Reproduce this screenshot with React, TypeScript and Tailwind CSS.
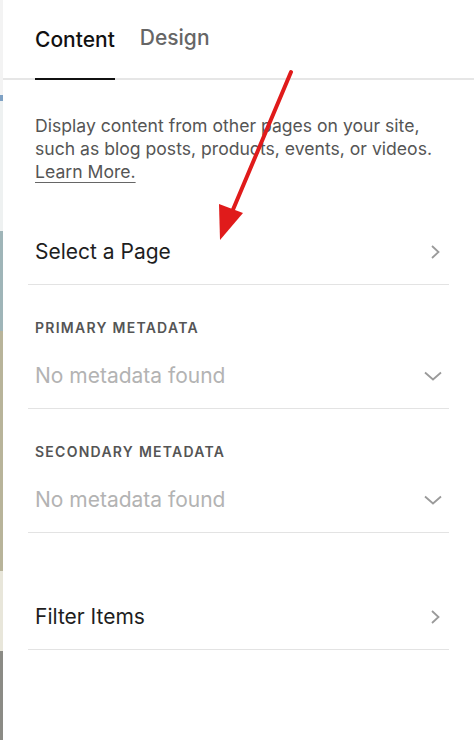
import React from 'react';

const font = { fontFamily: 'Inter, "Noto Sans", sans-serif' };

const ChevronRight = () => (
  <svg width="14" height="16" viewBox="0 0 14 16" fill="none" className="text-[#9a9a9a]">
    <path d="M4 2l6.5 6L4 14" stroke="currentColor" strokeWidth="1.8" />
  </svg>
);

const ChevronDown = () => (
  <svg width="22" height="12" viewBox="0 0 22 12" fill="none" className="text-[#9a9a9a]">
    <path d="M3 2.5l8 7 8-7" stroke="currentColor" strokeWidth="1.8" />
  </svg>
);

const Row = ({ label }: { label: string }) => (
  <div className="flex items-center justify-between h-[66px] pl-[7px] pr-[7px] border-b border-[#e3e3e3]">
    <span className="text-[21px] text-[#1e1e1e]">{label}</span>
    <ChevronRight />
  </div>
);

const MetaSelect = ({ title }: { title: string }) => (
  <div className="pt-[35px] border-b border-[#e3e3e3]">
    <div className="pl-[7px] text-[14px] font-semibold tracking-[0.09em] text-[#555] leading-[16px]">{title}</div>
    <div className="flex items-center justify-between mt-[8px] h-[64px] pl-[7px] pr-[5px]">
      <span className="text-[21px] text-[#b3b3b3]">No metadata found</span>
      <ChevronDown />
    </div>
  </div>
);

export default function App() {
  return (
    <div className="relative w-[474px] h-[740px] bg-white flex overflow-hidden" style={font}>
      <div className="w-[3px] flex flex-col">
        <div className="h-[95px] bg-[#f3f3f3]" />
        <div className="h-[6px] bg-[#7ea1c4]" />
        <div className="h-[130px] bg-[#eef1f1]" />
        <div className="h-[100px] bg-[#9fb5b8]" />
        <div className="h-[240px] bg-[#b8b49a]" />
        <div className="h-[80px] bg-[#e8e6da]" />
        <div className="flex-1 bg-[#8b8b85]" />
      </div>
      <div className="flex-1">
        <div className="flex items-end gap-[25px] pl-[32px] h-[80px] border-b-2 border-[#e6e6e6]">
          <div className="border-b-2 border-[#111] -mb-[2px]">
            <div className="pb-[25px] text-[21px] font-medium text-[#111] leading-[26px]">Content</div>
          </div>
          <div className="pb-[27px] text-[21px] font-medium text-[#666] leading-[26px]">Design</div>
        </div>

        <div className="px-[25px]">
          <p className="pl-[7px] pt-[34px] text-[17.6px] leading-[23px] text-[#555]">
            Display content from other pages on your site, such as blog posts, products, events, or videos.{' '}
            <span className="underline underline-offset-[4px] decoration-[#666]">Learn More.</span>
          </p>

          <div className="pt-[36px]">
            <Row label="Select a Page" />
          </div>
          <MetaSelect title="PRIMARY METADATA" />
          <MetaSelect title="SECONDARY METADATA" />
          <div className="pt-[51px]">
            <Row label="Filter Items" />
          </div>
        </div>
      </div>

      <svg className="absolute left-0 top-0 pointer-events-none" width="474" height="740">
        <line x1="291" y1="72" x2="232" y2="212" stroke="#e01b1b" strokeWidth="4" strokeLinecap="round" />
        <polygon points="220,240 219,204 243,213" fill="#e01b1b" />
      </svg>
    </div>
  );
}
